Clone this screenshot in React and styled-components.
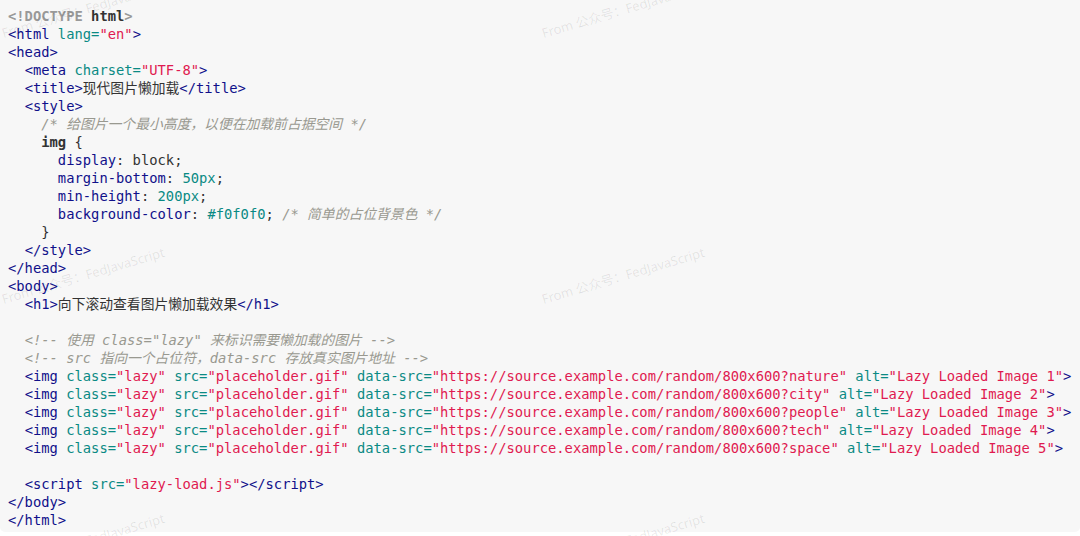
import React from 'react';
import styled, { createGlobalStyle } from 'styled-components';

const GlobalStyle = createGlobalStyle`
    html, body {
        margin: 0;
        padding: 0;
        background: #ffffff;
    }
`

const Wrapper = styled.div`
    position: relative;
    width: 1080px;
    height: 536px;
    overflow: hidden;
    background: #ffffff;
`

const CodeBlock = styled.pre`
    margin: 0;
    height: 532px;
    box-sizing: border-box;
    padding: 7px 0 0 8px;
    background: #f7f7f7;
    border-radius: 0 0 5px 5px;
    font-family: 'DejaVu Sans Mono', 'Noto Sans CJK SC', monospace;
    font-size: 13.8px;
    line-height: 18px;
    color: #333333;
    white-space: pre;
`

const Line = styled.div`
    height: 18px;
`

const colors = {
    meta: '#999999',
    kw: '#333333',
    tag: '#10108a',
    attr: '#0a8a84',
    str: '#e01a50',
    comment: '#999990',
    sel: '#333333',
    prop: '#10108a',
    num: '#0a8a84',
    plain: '#333333',
}

const Token = styled.span`
    color: ${p => colors[p.$kind] || '#333333'};
    font-weight: ${p => (p.$kind === 'meta' || p.$kind === 'kw' || p.$kind === 'sel' ? 'bold' : 'normal')};
    font-style: ${p => (p.$kind === 'comment' ? 'italic' : 'normal')};
`

const Mark = styled.div`
    position: absolute;
    left: ${p => p.$x}px;
    top: ${p => p.$y}px;
    transform-origin: 0 100%;
    transform: rotate(-16.4deg);
    font-family: 'Noto Sans', 'Noto Sans CJK SC', sans-serif;
    font-size: 13px;
    line-height: 14px;
    color: rgba(0, 0, 0, 0.09);
    white-space: nowrap;
    pointer-events: none;
`

const img = (topic, n) => [
    ['plain', '  '],
    ['tag', '<img '],
    ['attr', 'class='],
    ['str', '"lazy"'],
    ['plain', ' '],
    ['attr', 'src='],
    ['str', '"placeholder.gif"'],
    ['plain', ' '],
    ['attr', 'data-src='],
    ['str', `"https://source.example.com/random/800x600?${topic}"`],
    ['plain', ' '],
    ['attr', 'alt='],
    ['str', `"Lazy Loaded Image ${n}"`],
    ['tag', '>'],
]

const lines = [
    [['meta', '<!DOCTYPE '], ['kw', 'html'], ['meta', '>']],
    [['tag', '<html '], ['attr', 'lang='], ['str', '"en"'], ['tag', '>']],
    [['tag', '<head>']],
    [['plain', '  '], ['tag', '<meta '], ['attr', 'charset='], ['str', '"UTF-8"'], ['tag', '>']],
    [['plain', '  '], ['tag', '<title>'], ['plain', '现代图片懒加载'], ['tag', '</title>']],
    [['plain', '  '], ['tag', '<style>']],
    [['plain', '    '], ['comment', '/* 给图片一个最小高度，以便在加载前占据空间 */']],
    [['plain', '    '], ['sel', 'img'], ['plain', ' {']],
    [['plain', '      '], ['prop', 'display'], ['plain', ': block;']],
    [['plain', '      '], ['prop', 'margin-bottom'], ['plain', ': '], ['num', '50px'], ['plain', ';']],
    [['plain', '      '], ['prop', 'min-height'], ['plain', ': '], ['num', '200px'], ['plain', ';']],
    [['plain', '      '], ['prop', 'background-color'], ['plain', ': '], ['num', '#f0f0f0'], ['plain', '; '], ['comment', '/* 简单的占位背景色 */']],
    [['plain', '    }']],
    [['plain', '  '], ['tag', '</style>']],
    [['tag', '</head>']],
    [['tag', '<body>']],
    [['plain', '  '], ['tag', '<h1>'], ['plain', '向下滚动查看图片懒加载效果'], ['tag', '</h1>']],
    [],
    [['plain', '  '], ['comment', '<!-- 使用 class="lazy" 来标识需要懒加载的图片 -->']],
    [['plain', '  '], ['comment', '<!-- src 指向一个占位符，data-src 存放真实图片地址 -->']],
    img('nature', 1),
    img('city', 2),
    img('people', 3),
    img('tech', 4),
    img('space', 5),
    [],
    [['plain', '  '], ['tag', '<script '], ['attr', 'src='], ['str', '"lazy-load.js"'], ['tag', '></script>']],
    [['tag', '</body>']],
    [['tag', '</html>']],
]

const marks = [
    [4, 26], [544, 26],
    [4, 292], [544, 292],
    [4, 558], [544, 558],
]

const App = () => (
    <Wrapper>
        <GlobalStyle />
        <CodeBlock>
            {lines.map((tokens, i) => (
                <Line key={i}>
                    {tokens.map(([kind, text], j) => (
                        <Token key={j} $kind={kind}>{text}</Token>
                    ))}
                </Line>
            ))}
        </CodeBlock>
        {marks.map(([x, y], i) => (
            <Mark key={i} $x={x} $y={y}>From 公众号：FedJavaScript</Mark>
        ))}
    </Wrapper>
)

export default App
